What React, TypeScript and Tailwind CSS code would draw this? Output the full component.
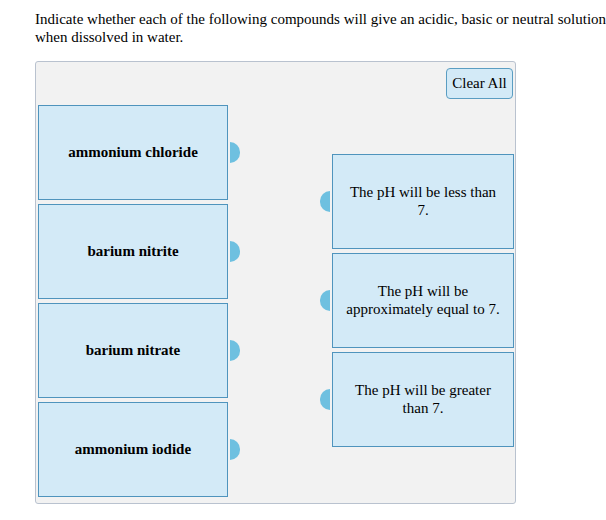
import React from 'react';

const compounds = ['ammonium chloride', 'barium nitrite', 'barium nitrate', 'ammonium iodide'];

const answers = [
	'The pH will be less than 7.',
	'The pH will be approximately equal to 7.',
	'The pH will be greater than 7.',
];

const CompoundCard: React.FC<{ label: string }> = ({ label }) => (
	<div className="flex items-center">
		<div className="w-[190px] h-[95px] flex items-center justify-center border border-[#4f94bd] bg-[#d3eaf7] px-3 pb-[2px] text-center font-bold">
			{label}
		</div>
		<div className="ml-[2px] w-[10px] h-[21px] rounded-r-full bg-[#6ec0e0]" />
	</div>
);

const AnswerCard: React.FC<{ label: string }> = ({ label }) => (
	<div className="flex items-center">
		<div className="mr-[2px] w-[10px] h-[21px] rounded-l-full bg-[#6ec0e0]" />
		<div className="w-[182px] h-[95px] flex items-center justify-center border border-[#4f94bd] bg-[#d3eaf7] px-3 pb-[2px] text-center">
			{label}
		</div>
	</div>
);

const App: React.FC = () => {
	return (
		<main className="min-h-[520px] bg-white pl-[35px] pt-[10px] font-['Liberation_Serif','Times_New_Roman',serif] text-[15px] leading-[18px] text-black">
			<p className="w-[575px]">
				Indicate whether each of the following compounds will give an acidic, basic or neutral solution when
				dissolved in water.
			</p>
			<div className="mt-[15px] w-[481px] rounded-[3px] border border-[#b9c2cf] bg-[#f2f2f2] pt-[6px] pb-[6px] pl-[2px] pr-[2px]">
				<div className="flex justify-end">
					<button className="h-[31px] w-[67px] rounded-[4px] border border-[#5a9dc2] bg-[#d3eaf7] font-['Liberation_Serif','Times_New_Roman',serif] text-[15px] leading-none">
						Clear All
					</button>
				</div>
				<div className="mt-[6px] flex">
					<div className="flex flex-col gap-[4px]">
						{compounds.map((c) => (
							<CompoundCard key={c} label={c} />
						))}
					</div>
					<div className="ml-[80px] mt-[49px] flex flex-col gap-[4px]">
						{answers.map((a) => (
							<AnswerCard key={a} label={a} />
						))}
					</div>
				</div>
			</div>
		</main>
	);
};

export default App;
